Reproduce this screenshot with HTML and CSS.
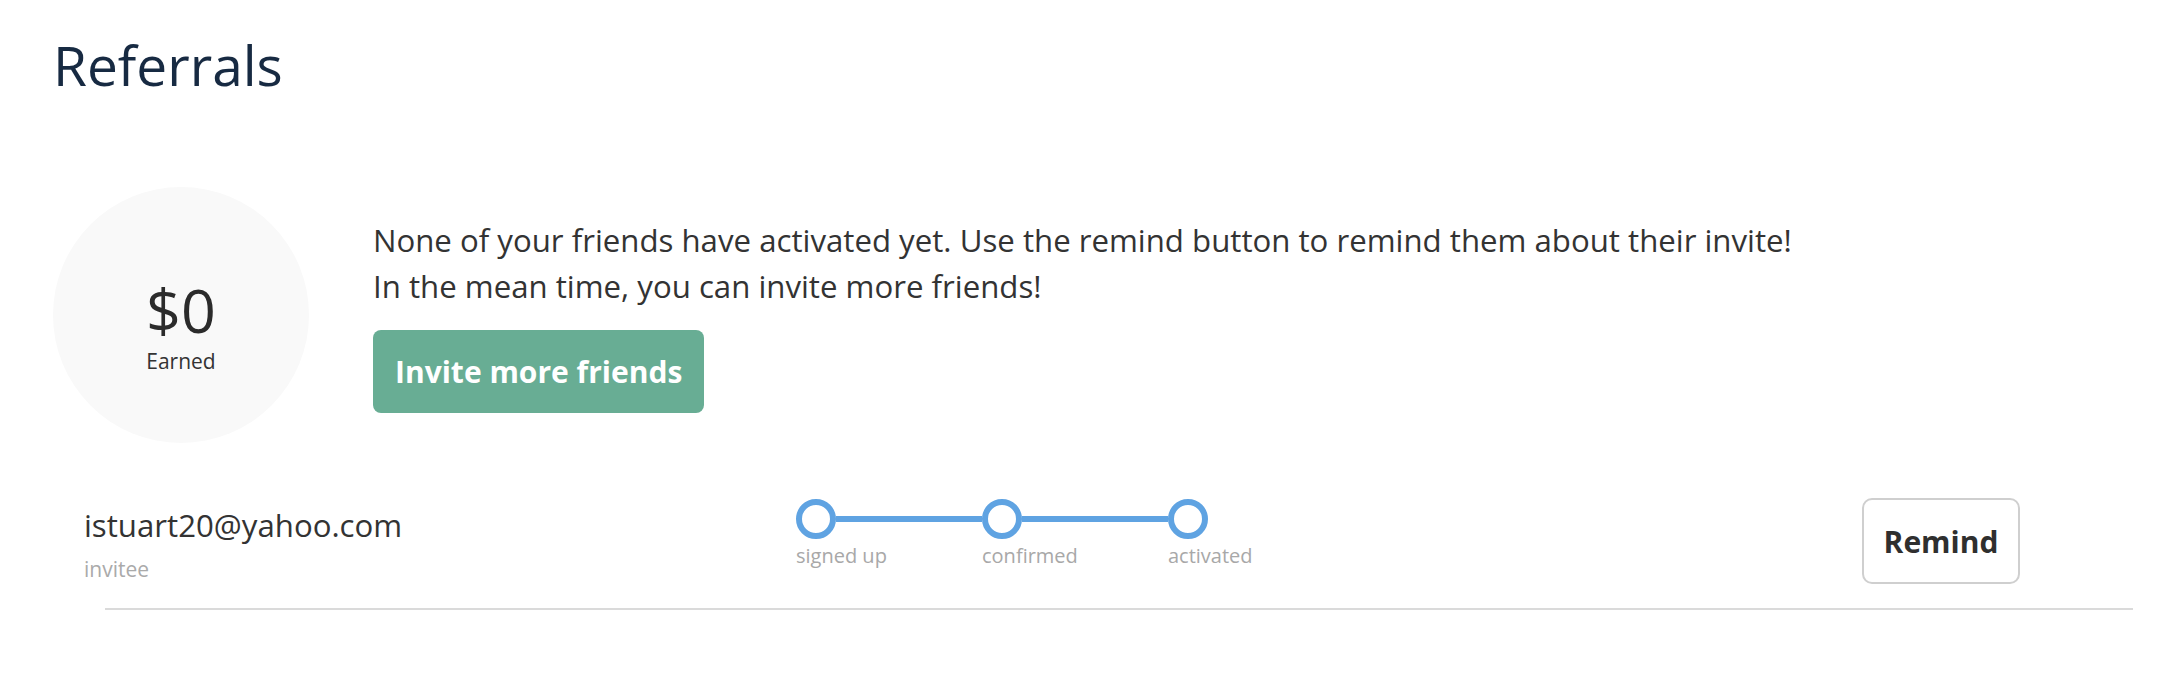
FILE: index.html
```html
<!DOCTYPE html>
<html lang="en">
<head>
<meta charset="utf-8">
<title>Referrals</title>
<link rel="stylesheet" href="styles.css">
</head>
<body>
<main class="page">
  <h1 class="title">Referrals</h1>

  <section class="summary">
    <div class="earned">
      <div class="amount">$0</div>
      <div class="amount-label">Earned</div>
    </div>
    <div class="message">
      <p class="line">None of your friends have activated yet. Use the remind button to remind them about their invite!</p>
      <p class="line">In the mean time, you can invite more friends!</p>
      <button class="invite-btn" type="button">Invite more friends</button>
    </div>
  </section>

  <section class="invitee">
    <div class="who">
      <div class="email">istuart20@yahoo.com</div>
      <div class="role">invitee</div>
    </div>
    <div class="progress">
      <div class="track">
        <span class="dot"></span>
        <span class="bar"></span>
        <span class="dot"></span>
        <span class="bar"></span>
        <span class="dot"></span>
      </div>
      <div class="labels">
        <span class="step">signed up</span>
        <span class="step">confirmed</span>
        <span class="step">activated</span>
      </div>
    </div>
    <button class="remind-btn" type="button">Remind</button>
  </section>
  <div class="divider"></div>
</main>
</body>
</html>
```

FILE: styles.css
```css
html, body {
  margin: 0;
  padding: 0;
  background: #ffffff;
}

body {
  font-family: "Open Sans", "Liberation Sans", sans-serif;
  color: #333333;
}

.page {
  width: 2172px;
}

.title {
  margin: 0 0 0 53px;
  padding-top: 32px;
  font-size: 55px;
  line-height: 66px;
  font-weight: 400;
  color: #172a42;
}

.summary {
  display: flex;
  align-items: center;
  gap: 64px;
  margin: 89px 0 0 53px;
}

.earned {
  flex: none;
  box-sizing: border-box;
  width: 256px;
  height: 256px;
  border-radius: 50%;
  background: #f9f9f9;
  display: flex;
  flex-direction: column;
  align-items: center;
  justify-content: center;
  padding-top: 20px;
}

.amount {
  font-size: 61px;
  line-height: 70px;
  color: #2b2b2b;
}

.amount-label {
  margin-top: 2px;
  font-size: 21px;
  line-height: 28px;
  color: #333333;
}

.message {
  display: flex;
  flex-direction: column;
  align-items: flex-start;
}

.line {
  margin: 0;
  font-size: 31.2px;
  line-height: 46px;
  color: #333333;
  white-space: nowrap;
}

.invite-btn {
  margin-top: 21px;
  height: 83px;
  padding: 0 22px;
  border: none;
  border-radius: 8px;
  background: #68ad94;
  color: #ffffff;
  font-family: "Open Sans", "Liberation Sans", sans-serif;
  font-size: 30px;
  font-weight: 700;
  cursor: pointer;
}

.invitee {
  display: flex;
  align-items: flex-start;
  margin: 54px 152px 0 84px;
}

.who {
  flex: none;
  width: 712px;
  padding-top: 7px;
}

.email {
  font-size: 31.2px;
  line-height: 42px;
  color: #333333;
}

.role {
  margin-top: 9px;
  font-size: 21px;
  line-height: 28px;
  color: #aaaaaa;
}

.progress {
  flex: none;
  margin-top: 2px;
}

.track {
  display: flex;
  align-items: center;
  height: 40px;
}

.dot {
  box-sizing: border-box;
  width: 40px;
  height: 40px;
  border: 6px solid #5fa3e2;
  border-radius: 50%;
  background: #ffffff;
  flex: none;
}

.bar {
  width: 146px;
  height: 6px;
  background: #5fa3e2;
  flex: none;
}

.labels {
  display: flex;
  margin-top: 4px;
}

.step {
  width: 186px;
  font-size: 20px;
  line-height: 26px;
  color: #a8a8a8;
}

.remind-btn {
  margin-left: auto;
  margin-top: 1px;
  box-sizing: border-box;
  width: 158px;
  height: 86px;
  border: 2px solid #cfcfcf;
  border-radius: 10px;
  background: #ffffff;
  color: #2f2f2f;
  font-family: "Open Sans", "Liberation Sans", sans-serif;
  font-size: 30px;
  font-weight: 700;
  cursor: pointer;
}

.divider {
  height: 2px;
  margin: 24px 39px 0 105px;
  background: #dadada;
}
```
